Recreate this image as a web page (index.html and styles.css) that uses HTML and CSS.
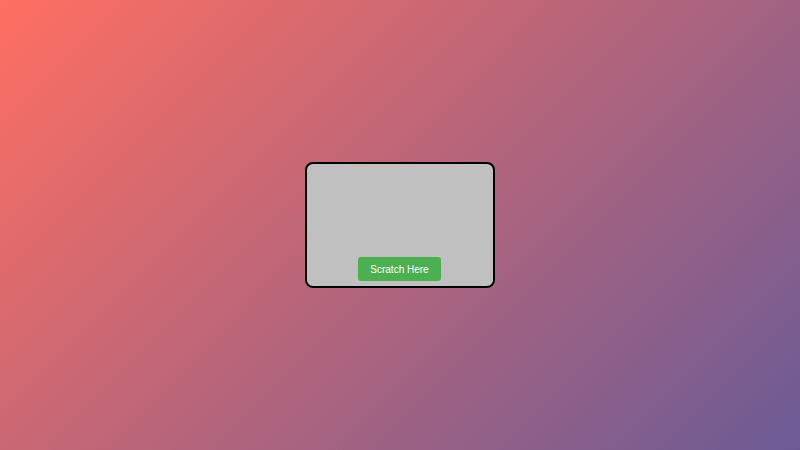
FILE: index.html
```html
<!DOCTYPE html>
<html>
<head>
<meta charset="utf-8">
<link rel="stylesheet" href="styles.css">
</head>
<body>
<div class="stage">
  <div class="card">
    <button class="scratch-btn">Scratch Here</button>
  </div>
</div>
</body>
</html>
```
FILE: styles.css
```css
html, body {
  margin: 0;
  padding: 0;
  height: 100%;
}
body {
  background: linear-gradient(135deg, #ff6f61, #6b5b95);
  font-family: "Liberation Sans", Arial, sans-serif;
}
.stage {
  height: 100vh;
  display: flex;
  align-items: center;
  justify-content: center;
}
.card {
  box-sizing: border-box;
  width: 190px;
  height: 126px;
  background: #c0c0c0;
  border: 2px solid #000;
  border-radius: 8px;
  display: flex;
  flex-direction: column;
  align-items: center;
  justify-content: flex-end;
  padding-bottom: 5px;
}
.scratch-btn {
  box-sizing: border-box;
  width: 83px;
  height: 24px;
  background: #4caf50;
  color: #fff;
  border: none;
  border-radius: 3px;
  font-family: "Liberation Sans", Arial, sans-serif;
  font-size: 10px;
  padding: 0;
  margin-left: -1px;
}
```
